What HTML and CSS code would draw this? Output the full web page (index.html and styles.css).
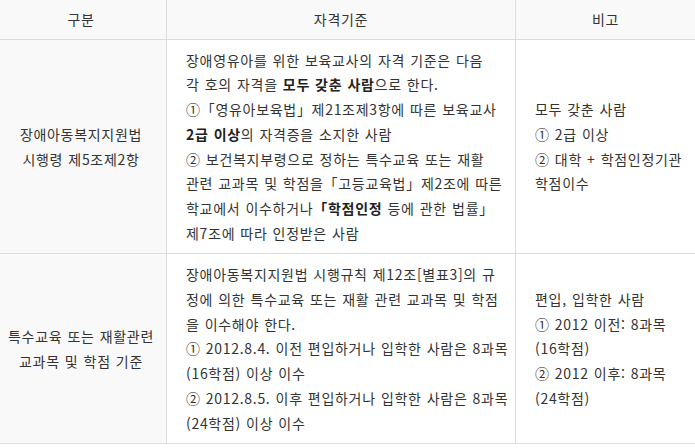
FILE: index.html
```html
<!DOCTYPE html>
<html lang="ko">
<head>
<meta charset="utf-8">
<title>장애영유아 보육교사 자격기준</title>
<link rel="stylesheet" href="styles.css">
</head>
<body>
<table class="grid">
  <colgroup>
    <col class="c-kind">
    <col class="c-std">
    <col class="c-note">
  </colgroup>
  <thead>
    <tr>
      <th>구분</th>
      <th>자격기준</th>
      <th>비고</th>
    </tr>
  </thead>
  <tbody>
    <tr>
      <td class="kind">장애아동복지지원법<br>시행령 제5조제2항</td>
      <td class="std">
        <span class="ln">장애영유아를 위한 보육교사의 자격 기준은 다음</span><br>
        <span class="ln">각 호의 자격을 <b>모두 갖춘 사람</b>으로 한다.</span><br>
        <span class="ln">①「영유아보육법」제21조제3항에 따른 보육교사</span><br>
        <span class="ln"><b>2급 이상</b>의 자격증을 소지한 사람</span><br>
        <span class="ln">② 보건복지부령으로 정하는 특수교육 또는 재활</span><br>
        <span class="ln">관련 교과목 및 학점을「고등교육법」제2조에 따른</span><br>
        <span class="ln">학교에서 이수하거나<b>「학점인정</b> 등에 관한 법률」</span><br>
        <span class="ln">제7조에 따라 인정받은 사람</span>
      </td>
      <td class="note">
        <span class="ln">모두 갖춘 사람</span><br>
        <span class="ln">① 2급 이상</span><br>
        <span class="ln">② 대학 + 학점인정기관</span><br>
        <span class="ln">학점이수</span>
      </td>
    </tr>
    <tr>
      <td class="kind">특수교육 또는 재활관련<br>교과목 및 학점 기준</td>
      <td class="std">
        <span class="ln">장애아동복지지원법 시행규칙 제12조[별표3]의 규</span><br>
        <span class="ln">정에 의한 특수교육 또는 재활 관련 교과목 및 학점</span><br>
        <span class="ln">을 이수해야 한다.</span><br>
        <span class="ln">① 2012.8.4. 이전 편입하거나 입학한 사람은 8과목</span><br>
        <span class="ln">(16학점) 이상 이수</span><br>
        <span class="ln">② 2012.8.5. 이후 편입하거나 입학한 사람은 8과목</span><br>
        <span class="ln">(24학점) 이상 이수</span>
      </td>
      <td class="note">
        <span class="ln">편입, 입학한 사람</span><br>
        <span class="ln">① 2012 이전: 8과목</span><br>
        <span class="ln">(16학점)</span><br>
        <span class="ln">② 2012 이후: 8과목</span><br>
        <span class="ln">(24학점)</span>
      </td>
    </tr>
  </tbody>
</table>
</body>
</html>
```

FILE: styles.css
```css
html, body {
  margin: 0;
  padding: 0;
  background: #ffffff;
}

body {
  font-family: "Noto Sans CJK KR", "Noto Sans", sans-serif;
  font-size: 14px;
  letter-spacing: 0.7px;
  word-spacing: 0.5px;
  color: #333333;
  overflow: hidden;
}

.grid {
  border-collapse: collapse;
  table-layout: fixed;
  width: 700px;
  margin-left: -5px;
}

.c-kind { width: 171px; }
.c-std { width: 349px; }
.c-note { width: 180px; }

.grid th,
.grid td {
  border: 1px solid #dddddd;
  line-height: 24.7px;
}

.grid th {
  border-top: none;
  background: #f9f9f9;
  font-weight: normal;
  text-align: center;
  padding: 7px 0;
  color: #333333;
}

.grid td {
  padding: 8px 10px 8px 19px;
  vertical-align: middle;
  text-align: left;
}

.grid td.kind {
  background: #f9f9f9;
  text-align: center;
  padding: 8px 0;
}

.ln {
  white-space: nowrap;
}

.grid b {
  font-weight: bold;
  color: #222222;
}
```
